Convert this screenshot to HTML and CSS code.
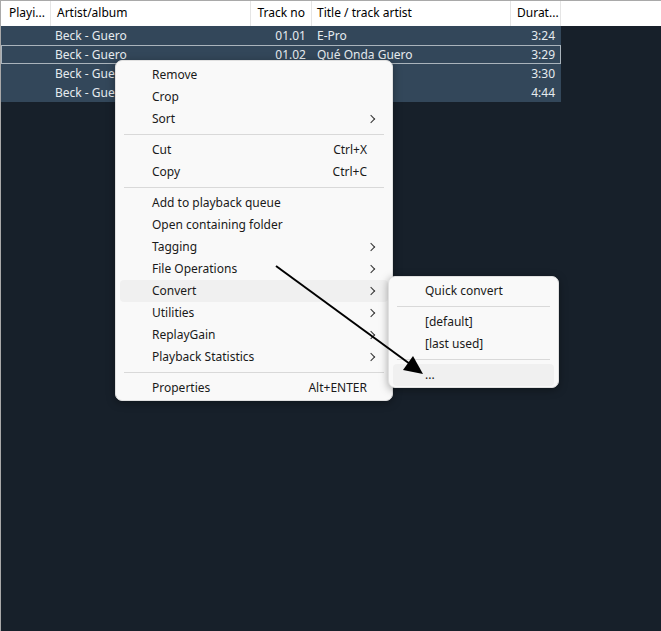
FILE: index.html
```html
<!DOCTYPE html>
<html lang="en">
    <head>
        <meta charset="utf-8" />
        <title>Playlist</title>
        <link rel="stylesheet" href="styles.css">
    </head>

    <body>
        <div class="window">
            <div class="header">
                <div class="col c-play">Playi...</div>
                <div class="col c-artist">Artist/album</div>
                <div class="col c-track right">Track no</div>
                <div class="col c-title">Title / track artist</div>
                <div class="col c-dur">Durat...</div>
            </div>

            <div class="row">
                <div class="col c-play"></div>
                <div class="col c-artist">Beck - Guero</div>
                <div class="col c-track right">01.01</div>
                <div class="col c-title">E-Pro</div>
                <div class="col c-dur right">3:24</div>
            </div>
            <div class="row focus">
                <div class="col c-play"></div>
                <div class="col c-artist">Beck - Guero</div>
                <div class="col c-track right">01.02</div>
                <div class="col c-title">Qué Onda Guero</div>
                <div class="col c-dur right">3:29</div>
            </div>
            <div class="row">
                <div class="col c-play"></div>
                <div class="col c-artist">Beck - Guero</div>
                <div class="col c-track right">01.03</div>
                <div class="col c-title">Girl</div>
                <div class="col c-dur right">3:30</div>
            </div>
            <div class="row">
                <div class="col c-play"></div>
                <div class="col c-artist">Beck - Guero</div>
                <div class="col c-track right">01.04</div>
                <div class="col c-title">Missing</div>
                <div class="col c-dur right">4:44</div>
            </div>
        </div>

        <div class="menu main-menu">
            <div class="item">Remove</div>
            <div class="item">Crop</div>
            <div class="item sub">Sort</div>
            <div class="sep"></div>
            <div class="item"><span>Cut</span><span class="key">Ctrl+X</span></div>
            <div class="item"><span>Copy</span><span class="key">Ctrl+C</span></div>
            <div class="sep"></div>
            <div class="item">Add to playback queue</div>
            <div class="item">Open containing folder</div>
            <div class="item sub">Tagging</div>
            <div class="item sub">File Operations</div>
            <div class="item sub hover">Convert</div>
            <div class="item sub">Utilities</div>
            <div class="item sub">ReplayGain</div>
            <div class="item sub">Playback Statistics</div>
            <div class="sep"></div>
            <div class="item"><span>Properties</span><span class="key">Alt+ENTER</span></div>
        </div>

        <div class="menu sub-menu">
            <div class="item">Quick convert</div>
            <div class="sep"></div>
            <div class="item">[default]</div>
            <div class="item">[last used]</div>
            <div class="sep"></div>
            <div class="item hover">...</div>
        </div>

        <svg class="pointer" width="661" height="631" viewBox="0 0 661 631">
            <line x1="276" y1="266" x2="410" y2="364" stroke="#000" stroke-width="2"/>
            <polygon points="423,374 403,370 413,356" fill="#000"/>
        </svg>
    </body>
</html>
```

FILE: styles.css
```css
html, body {
    margin: 0;
    padding: 0;
    width: 661px;
    height: 631px;
    overflow: hidden;
}
body {
    font-family: "Noto Sans", "Open Sans", sans-serif;
    font-size: 12px;
    background: #17202a;
    position: relative;
}
.window {
    height: 631px;
    box-sizing: border-box;
    border-top: 1px solid #a9a9a9;
    border-left: 1px solid #a9a9a9;
}
.header {
    display: flex;
    height: 25px;
    background: #fff;
    color: #000;
}
.header .col {
    line-height: 24px;
    border-right: 1px solid #e5e5e5;
}
.col {
    box-sizing: border-box;
    padding: 0 6px;
    white-space: nowrap;
    overflow: hidden;
}
.right {
    text-align: right;
}
.c-play { width: 50px; padding-left: 8px; }
.c-artist { width: 200px; }
.c-track { width: 61px; }
.c-title { width: 199px; padding-left: 5px; }
.c-dur { width: 50px; }
.header .c-artist { padding-left: 6px; }
.row {
    display: flex;
    width: 560px;
    height: 19px;
    box-sizing: border-box;
    background: #33475a;
    color: #e6ebef;
    line-height: 19px;
}
.row .c-artist { padding-left: 4px; }
.row.focus {
    border: 1px solid #aab4bc;
    line-height: 17px;
}
.row.focus .c-play { width: 49px; }
.row.focus .c-dur { width: 49px; padding-right: 5px; }
.menu {
    position: absolute;
    background: #f9f9f9;
    border: 1px solid #e0e0e0;
    border-radius: 7px;
    box-shadow: 0 2px 8px rgba(0, 0, 0, 0.35);
    padding: 3px 4px 1px 4px;
    color: #1a1a1a;
}
.main-menu {
    left: 115px;
    top: 60px;
    width: 268px;
}
.sub-menu {
    left: 388px;
    top: 276px;
    width: 161px;
}
.item {
    display: flex;
    justify-content: space-between;
    height: 22px;
    line-height: 22px;
    padding: 0 21px 0 32px;
    border-radius: 4px;
    position: relative;
}
.item.sub::after {
    content: "";
    position: absolute;
    right: 14px;
    top: 8px;
    width: 5px;
    height: 5px;
    border-top: 1px solid #333;
    border-right: 1px solid #333;
    transform: rotate(45deg);
}
.item.hover {
    background: #f0f0f0;
}
.sep {
    height: 1px;
    background: #d9d9d9;
    margin: 4px;
}
.sub-menu .sep:last-of-type {
    margin-bottom: 3px;
}
.pointer {
    position: absolute;
    left: 0;
    top: 0;
    pointer-events: none;
}
```
